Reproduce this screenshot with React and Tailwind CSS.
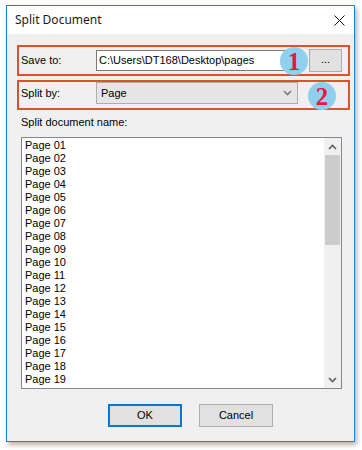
const pages = Array.from({ length: 19 }, (_, i) => `Page ${String(i + 1).padStart(2, "0")}`);

function Badge({ n, className }) {
  return (
    <div
      className={`absolute flex h-[28px] w-[28px] items-center justify-center rounded-full bg-[#8fd0ef] font-['Liberation_Serif',serif] text-[25px] font-bold leading-none text-[#e8173c] ${className}`}
    >
      {n}
    </div>
  );
}

function Chevron({ up, className }) {
  return (
    <svg width="9" height="6" viewBox="0 0 9 6" className={className}>
      <path
        d={up ? "M1 5 L4.5 1.5 L8 5" : "M1 1 L4.5 4.5 L8 1"}
        fill="none"
        stroke="#606060"
        strokeWidth="1.6"
      />
    </svg>
  );
}

export default function App() {
  return (
    <div className="h-[450px] w-[362px] bg-white pl-[6px] pt-[5px] font-['Liberation_Sans',Arial,sans-serif] text-[11px] text-black">
      <div className="flex h-[437px] w-[349px] flex-col border border-[#1883d7] bg-[#f0f0f0] shadow-[2px_3px_5px_rgba(0,0,0,0.3)]">
        {/* TITLE */}
        <div className="flex h-[28px] items-center justify-between bg-white pl-[8px] pr-[9px]">
          <span className="font-['Noto_Sans',sans-serif] text-[12px] text-[#1a1a1a]">Split Document</span>
          <svg width="11" height="11" viewBox="0 0 11 11">
            <path d="M0.5 0.5 L10.5 10.5 M10.5 0.5 L0.5 10.5" stroke="#111" strokeWidth="1" />
          </svg>
        </div>

        {/* BODY */}
        <div className="flex flex-1 flex-col pl-[10px] pr-[4px] pt-[11px]">
          {/* SAVE TO */}
          <div className="relative flex h-[31px] items-center border-2 border-[#dc5130] pl-[2px]">
            <span className="w-[75px]">Save to:</span>
            <div className="flex h-[21px] w-[192px] items-center border border-[#7a7a7a] bg-white pl-[2px]">
              C:\Users\DT168\Desktop\pages
            </div>
            <div className="ml-[21px] flex h-[23px] w-[33px] items-center justify-center border border-[#adadad] bg-[#e1e1e1] pb-[3px]">
              ...
            </div>
            <Badge n="1" className="left-[261px] top-[0px]" />
          </div>

          {/* SPLIT BY */}
          <div className="relative mt-[4px] h-[30px] border-2 border-[#dc5130] pl-[2px]">
            <div className="flex items-center">
              <span className="w-[75px]">Split by:</span>
              <div className="flex h-[22px] w-[202px] items-center justify-between border border-[#adadad] bg-[#e5e5e5] pl-[4px] pr-[5px]">
                <span>Page</span>
                <Chevron className="opacity-80" />
              </div>
            </div>
            <Badge n="2" className="left-[289px] top-[0px]" />
          </div>

          <div className="mt-[6px] pl-[4px] leading-[13px]">Split document name:</div>

          {/* LIST */}
          <div className="ml-[4px] mt-[8px] flex h-[252px] w-[321px] border border-[#828790] bg-white">
            <div className="flex-1 pl-[3px] pt-[1px] leading-[13px]">
              {pages.map((p) => (
                <div key={p}>{p}</div>
              ))}
            </div>
            <div className="flex w-[17px] flex-col bg-[#f0f0f0]">
              <div className="flex h-[17px] items-center justify-center">
                <Chevron up />
              </div>
              <div className="mx-[1px] h-[90px] bg-[#cdcdcd]" />
              <div className="flex-1" />
              <div className="flex h-[17px] items-center justify-center">
                <Chevron />
              </div>
            </div>
          </div>

          {/* BUTTONS */}
          <div className="mt-[15px] flex gap-[17px] pl-[91px]">
            <div className="flex h-[23px] w-[74px] items-center justify-center border-2 border-[#0078d7] bg-[#e1e1e1]">
              OK
            </div>
            <div className="flex h-[23px] w-[74px] items-center justify-center border border-[#adadad] bg-[#e1e1e1]">
              Cancel
            </div>
          </div>
        </div>
      </div>
    </div>
  );
}
